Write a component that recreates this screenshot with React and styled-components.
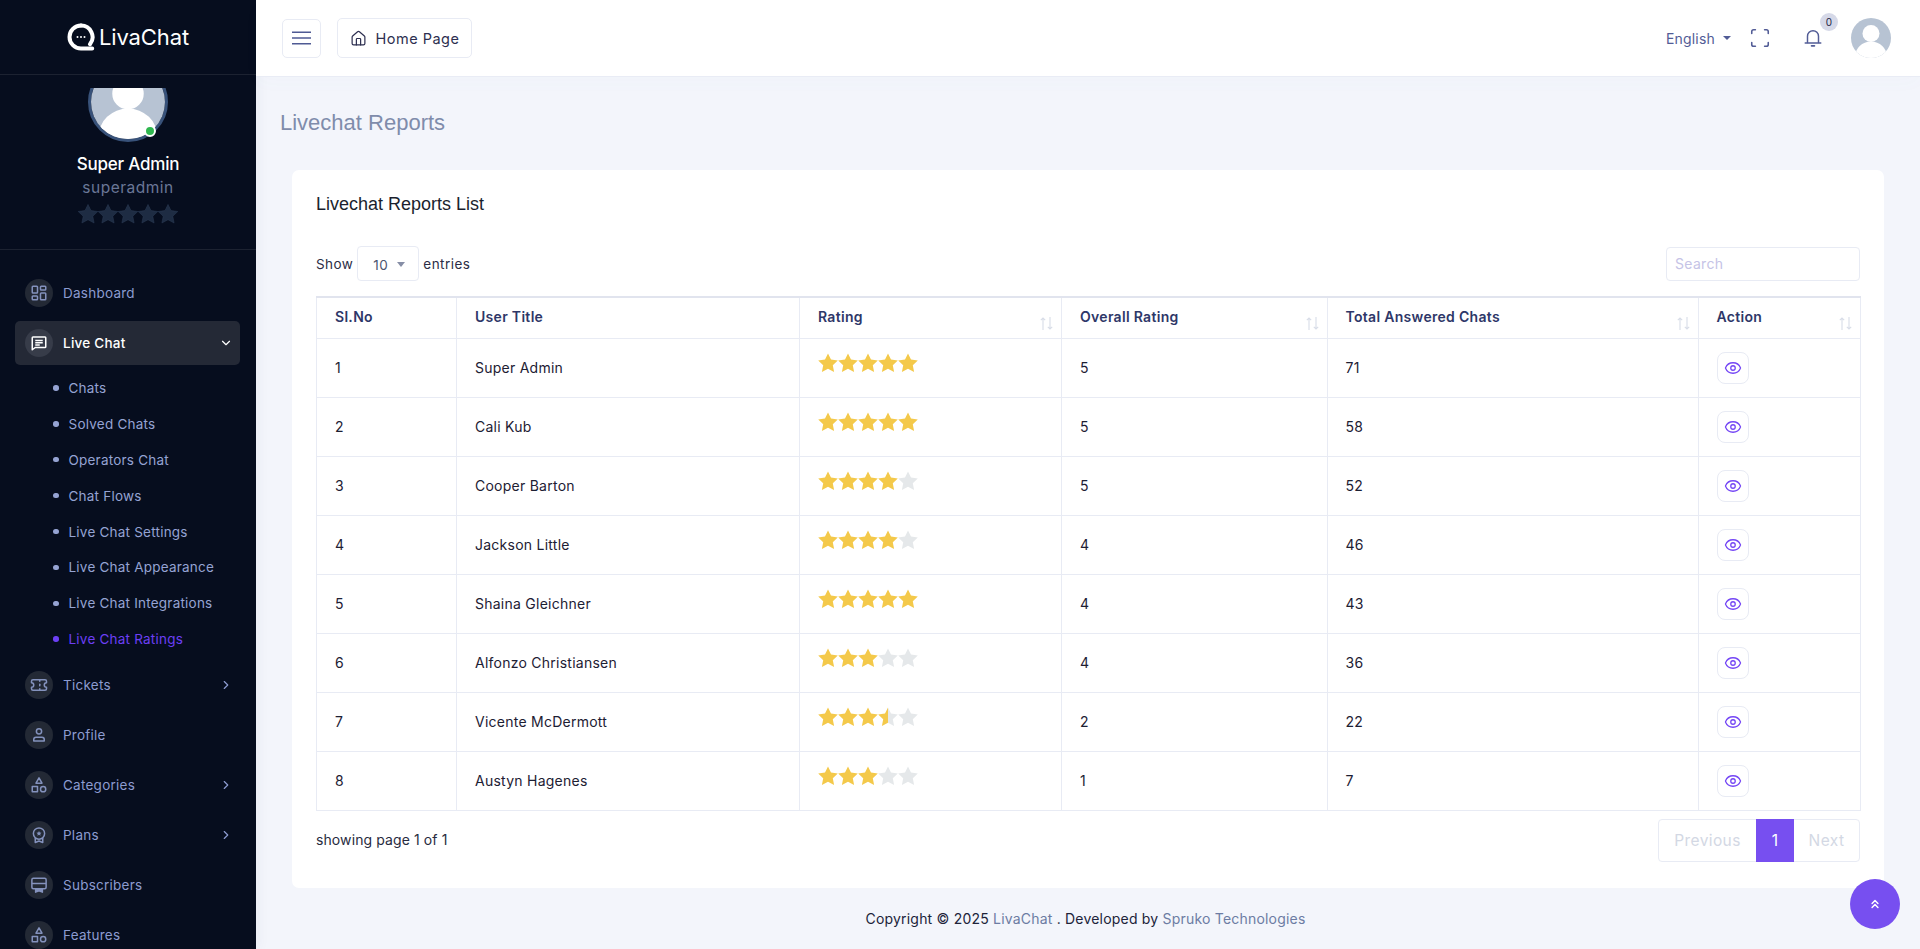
import React from 'react';
import styled, { createGlobalStyle } from 'styled-components';
import { LayoutDashboard, Ticket, ChevronDown, ChevronRight, House, Scan, Eye, ChevronsUp } from 'lucide-react';

const GlobalStyle = createGlobalStyle`
  html, body {
    margin: 0;
    padding: 0;
    height: 100%;
    overflow: hidden;
    background: #f3f5fb;
    font-family: Inter, "Noto Sans", sans-serif;
  }
  * { box-sizing: border-box; }
`;

const Page = styled.div`
  display: flex;
  height: 100vh;
  overflow: hidden;
`;

const Sidebar = styled.aside`
  width: 256px;
  flex-shrink: 0;
  height: 100vh;
  overflow: hidden;
  background: #060d1e;
  box-shadow: 2px 0 12px rgba(40, 50, 90, 0.05);
`;

const Brand = styled.div`
  height: 75px;
  border-bottom: 1px solid #1c2231;
  display: flex;
  align-items: center;
  justify-content: center;
  gap: 4px;
`;

const BrandName = styled.span`
  color: #fff;
  font-size: 22px;
  font-weight: 400;
  letter-spacing: -0.1px;
`;

const UserPanel = styled.div`
  height: 175px;
  border-bottom: 1px solid #1c2231;
  padding-top: 13px;
  display: flex;
  flex-direction: column;
  align-items: center;
`;

const AvatarClip = styled.div`
  height: 54px;
  width: 90px;
  overflow: hidden;
  display: flex;
  justify-content: center;
  align-items: flex-end;
  position: relative;
`;

const StatusDot = styled.span`
  position: absolute;
  right: 17px;
  bottom: 5px;
  width: 12px;
  height: 12px;
  border-radius: 50%;
  background: #2fb74f;
  border: 2px solid #fff;
`;

const AvatarImage = styled.svg`
  display: block;
  flex-shrink: 0;
  border-radius: 50%;
  ${(p) => p.$ring && 'border: 3px solid #38527a; box-sizing: border-box;'}
`;

const UserName = styled.div`
  margin-top: 10px;
  color: #fff;
  font-size: 17px;
  font-weight: 500;
  line-height: 24px;
  letter-spacing: -0.2px;
`;

const UserLogin = styled.div`
  margin-top: 2px;
  color: #6a7797;
  font-size: 15.5px;
  line-height: 20px;
  letter-spacing: 0.5px;
`;

const StarRow = styled.div`
  display: flex;
  margin-top: ${(p) => p.$top || 0}px;
`;

const Nav = styled.nav`
  padding: 21px 16px 0 15px;
`;

const NavItem = styled.div`
  height: 44px;
  margin-bottom: 6px;
  padding: 0 10px;
  border-radius: 5px;
  display: flex;
  align-items: center;
  background: ${(p) => (p.$open ? '#242936' : 'transparent')};
  color: ${(p) => (p.$open ? '#fff' : '#8c9bd0')};
`;

const NavBadge = styled.span`
  width: 28px;
  height: 28px;
  border-radius: 50%;
  display: flex;
  align-items: center;
  justify-content: center;
  background: ${(p) => (p.$open ? '#373c49' : '#232935')};
  color: ${(p) => (p.$open ? '#fff' : '#8492bd')};
  flex-shrink: 0;
`;

const NavLabel = styled.span`
  margin-left: 10px;
  flex: 1;
  font-size: 13.5px;
  font-weight: ${(p) => (p.$open ? 500 : 400)};
  letter-spacing: 0.25px;
`;

const NavArrow = styled.span`
  display: flex;
  margin-right: -3px;
  color: ${(p) => (p.$open ? '#fff' : '#8c9bd0')};
`;

const SubList = styled.ul`
  list-style: none;
  margin: -1px 0 6px;
  padding: 0 0 0 38px;
`;

const SubItem = styled.li`
  height: 35.9px;
  display: flex;
  align-items: center;
  gap: 10px;
  font-size: 13.5px;
  letter-spacing: 0.22px;
  color: ${(p) => (p.$active ? '#6c3ff5' : '#95a3d3')};

  &::before {
    content: '';
    width: 5.5px;
    height: 5.5px;
    border-radius: 50%;
    background: ${(p) => (p.$active ? '#6c3ff5' : '#95a3d3')};
  }
`;

const Main = styled.main`
  flex: 1;
  min-width: 0;
  height: 100vh;
  display: flex;
  flex-direction: column;
`;

const Topbar = styled.header`
  height: 77px;
  flex-shrink: 0;
  background: #fff;
  border-bottom: 1px solid #e9ecf5;
  box-shadow: 0 6px 18px rgba(120, 130, 180, 0.02);
  padding: 0 29px 0 26px;
  display: flex;
  align-items: center;
`;

const MenuButton = styled.button`
  width: 39px;
  height: 39px;
  padding: 0;
  background: #fff;
  border: 1px solid #e8ebf4;
  border-radius: 5px;
  display: flex;
  align-items: center;
  justify-content: center;
  color: #4f5a94;
`;

const HomeButton = styled.button`
  margin-left: 16px;
  width: 135px;
  height: 40px;
  background: #fff;
  border: 1px solid #e8ebf4;
  border-radius: 5px;
  display: flex;
  align-items: center;
  justify-content: center;
  gap: 9px;
  padding: 0;
  font: inherit;
  font-size: 14.5px;
  letter-spacing: 0.5px;
  color: #2d2f50;
`;

const TopRight = styled.div`
  margin-left: auto;
  display: flex;
  align-items: center;
  color: #525c96;
`;

const Language = styled.div`
  display: flex;
  align-items: center;
  gap: 8px;
  font-size: 14px;
  letter-spacing: 0.2px;

  &::after {
    content: '';
    border-left: 4px solid transparent;
    border-right: 4px solid transparent;
    border-top: 4px solid #525c96;
  }
`;

const BellWrap = styled.div`
  position: relative;
  display: flex;
  margin: 0 27px 0 31px;
`;

const BellCount = styled.span`
  position: absolute;
  top: -14px;
  right: -14px;
  width: 18px;
  height: 18px;
  border-radius: 50%;
  background: #d6d9e8;
  color: #232646;
  font-size: 10px;
  display: flex;
  align-items: center;
  justify-content: center;
`;

const FullscreenIcon = styled.span`
  display: flex;
  margin-left: 18px;
`;

const Content = styled.div`
  flex: 1;
  min-height: 0;
  display: flex;
  flex-direction: column;
`;

const PageTitle = styled.h1`
  margin: 33px 0 34px 24px;
  font-family: "Liberation Sans", Arial, sans-serif;
  font-size: 22px;
  font-weight: 400;
  line-height: 26px;
  color: #7f8cab;
`;

const Card = styled.section`
  margin: 0 36px;
  padding: 22px 24px 26px;
  background: #fff;
  border-radius: 7px;
`;

const CardTitle = styled.h2`
  margin: 0;
  font-family: "Liberation Sans", Arial, sans-serif;
  font-size: 18px;
  font-weight: 400;
  line-height: 24px;
  color: #1b1f2e;
`;

const Controls = styled.div`
  margin: 31px 0 15px;
  height: 34px;
  display: flex;
  align-items: center;
  justify-content: space-between;
`;

const LengthControl = styled.div`
  display: flex;
  align-items: center;
  gap: 4px;
  margin-top: -1px;
  font-size: 13.5px;
  letter-spacing: 0.45px;
  color: #2b2d45;
`;

const LengthSelect = styled.div`
  width: 62px;
  height: 35px;
  padding: 2px 13px 0 15px;
  border: 1px solid #e8ebf4;
  border-radius: 4px;
  display: flex;
  align-items: center;
  justify-content: space-between;
  color: #4c5470;

  &::after {
    content: '';
    border-left: 4px solid transparent;
    border-right: 4px solid transparent;
    border-top: 5px solid #868ea6;
  }
`;

const SearchInput = styled.input`
  width: 194px;
  height: 34px;
  padding: 0 8px 1px;
  border: 1px solid #e8ebf4;
  border-radius: 4px;
  outline: none;
  font: inherit;
  font-size: 14px;
  letter-spacing: 0.3px;

  &::placeholder {
    color: #c5c3e6;
  }
`;

const Table = styled.table`
  width: 100%;
  table-layout: fixed;
  border-collapse: collapse;
  border-top: 2px solid #e1e4ee;
`;

const HeadCell = styled.th`
  position: relative;
  height: 41px;
  padding: 0 18px 2px;
  text-align: left;
  font-size: 14px;
  font-weight: 600;
  letter-spacing: 0.3px;
  color: #2e3768;
  border: 1px solid #e8ebf4;
  border-top: 0;
`;

const SortMark = styled.svg`
  position: absolute;
  right: 8px;
  top: 19px;
`;

const BodyCell = styled.td`
  height: 59px;
  padding: 0 18px;
  font-size: 14px;
  letter-spacing: 0.25px;
  color: #1d2033;
  border: 1px solid #e8ebf4;
`;

const RatingStars = styled.div`
  display: flex;
  margin-top: -10px;
`;

const ViewButton = styled.button`
  width: 32px;
  height: 32px;
  padding: 0;
  background: #fff;
  border: 1px solid #e8ebf4;
  border-radius: 8px;
  display: flex;
  align-items: center;
  justify-content: center;
  color: #7446f5;
`;

const TableFooter = styled.div`
  margin-top: 8px;
  display: flex;
  align-items: flex-start;
  justify-content: space-between;
`;

const PageInfo = styled.div`
  margin-top: 12px;
  font-size: 14px;
  letter-spacing: 0.1px;
  color: #282b40;
`;

const Pagination = styled.div`
  display: flex;
  height: 43px;
  border: 1px solid #e8ebf4;
  border-radius: 4px;
  font-size: 15.5px;
  color: #d3d8e4;
`;

const PageLink = styled.span`
  width: ${(p) => p.$width}px;
  margin: ${(p) => (p.$current ? '-1px 0' : '0')};
  display: flex;
  align-items: center;
  justify-content: center;
  background: ${(p) => (p.$current ? '#774ff0' : 'transparent')};
  color: ${(p) => (p.$current ? '#fff' : 'inherit')};
  letter-spacing: 0.4px;
`;

const Footer = styled.footer`
  flex: 1;
  padding-right: 5px;
  display: flex;
  align-items: center;
  justify-content: center;
  font-size: 14px;
  letter-spacing: 0.2px;
  color: #20233a;
  white-space: pre;
`;

const FooterLink = styled.span`
  color: #6c7ca3;
`;

const ScrollTop = styled.button`
  position: fixed;
  right: 20px;
  bottom: 20px;
  width: 50px;
  height: 50px;
  padding: 0;
  border: 0;
  border-radius: 50%;
  background: #774ff0;
  color: #fff;
  display: flex;
  align-items: center;
  justify-content: center;
`;

const STAR_PATH = 'M10 .4l3 6.2 6.8.9-5 4.7 1.3 6.8L10 15.7 3.9 19l1.3-6.8-5-4.7 6.8-.9z';

const Star = ({ fill, empty, fraction = 0, size = 20, id, outline }) => (
  <svg width={size} height={size} viewBox="0 0 20 20">
    {fraction > 0 && (
      <defs>
        <linearGradient id={id}>
          <stop offset={fraction} stopColor={fill} />
          <stop offset={fraction} stopColor={empty} />
        </linearGradient>
      </defs>
    )}
    <path d={STAR_PATH} fill={fraction > 0 ? `url(#${id})` : fill} stroke={outline} strokeWidth={outline ? 0.5 : 0} />
  </svg>
);

const Stars = ({ value, rowId }) => (
  <>
    {[0, 1, 2, 3, 4].map((i) => {
      const part = value - i;
      return (
        <Star
          key={i}
          id={`${rowId}-${i}`}
          fill={part > 0 ? '#f4c94a' : '#e5e8ea'}
          empty="#e5e8ea"
          fraction={part > 0 && part < 1 ? part : 0}
        />
      );
    })}
  </>
);

const Avatar = ({ size, ring }) => (
  <AvatarImage width={size} height={size} viewBox="0 0 80 80" $ring={ring}>
    <rect width="80" height="80" fill="#b7c3d3" />
    <circle cx="40" cy="31" r="17" fill="#fff" />
    <ellipse cx="40" cy="78" rx="32" ry="31" fill="#fff" />
  </AvatarImage>
);

const LogoMark = () => (
  <svg width="28" height="28" viewBox="0 0 28 28">
    <path
      d="M14 2.5a11.5 11.5 0 1 0 0 23h11.2"
      fill="none"
      stroke="#fff"
      strokeWidth="4"
      strokeLinecap="round"
    />
    <path d="M14 2.5a11.5 11.5 0 0 1 9 18.7" fill="none" stroke="#fff" strokeWidth="4" strokeLinecap="round" />
    <circle cx="10.5" cy="14" r="1" fill="#fff" />
    <circle cx="14" cy="14" r="1" fill="#fff" />
    <circle cx="17.5" cy="14" r="1" fill="#fff" />
  </svg>
);

const ChatIcon = () => (
  <svg width="18" height="18" viewBox="0 0 24 24" fill="none" stroke="currentColor" strokeWidth="2" strokeLinejoin="round">
    <path d="M4 4h16a1 1 0 0 1 1 1v12a1 1 0 0 1-1 1H7l-4 3V5a1 1 0 0 1 1-1z" />
    <path d="M7 8.5h10M7 11.5h10M7 14.5h6" />
  </svg>
);

const ProfileIcon = () => (
  <svg width="18" height="18" viewBox="0 0 24 24" fill="none" stroke="currentColor" strokeWidth="2" strokeLinejoin="round">
    <circle cx="12" cy="7" r="3.5" />
    <path d="M5 20v-2a3 3 0 0 1 3-3h8a3 3 0 0 1 3 3v2z" />
  </svg>
);

const ShapesIcon = () => (
  <svg width="18" height="18" viewBox="0 0 24 24" fill="none" stroke="currentColor" strokeWidth="2" strokeLinejoin="round">
    <path d="M12 2.5l4 7H8z" />
    <rect x="3" y="14" width="7" height="7" />
    <circle cx="17.5" cy="17.5" r="3.5" />
  </svg>
);

const AwardIcon = () => (
  <svg width="18" height="18" viewBox="0 0 24 24" fill="none" stroke="currentColor" strokeWidth="2" strokeLinejoin="round">
    <circle cx="12" cy="10" r="7.5" />
    <path d="M7 16v6l5-2 5 2v-6" />
    <path d="M12 6.5l1 2.3 2.4.2-1.8 1.6.6 2.4-2.2-1.3-2.2 1.3.6-2.4L8.6 9l2.4-.2z" fill="currentColor" stroke="none" />
  </svg>
);

const SubscribersIcon = () => (
  <svg width="18" height="18" viewBox="0 0 24 24" fill="none" stroke="currentColor" strokeWidth="2" strokeLinejoin="round">
    <rect x="2.5" y="3" width="19" height="14" rx="2" />
    <path d="M2.5 10h19" />
    <path d="M7.5 17v4.5l4.5-1.8 4.5 1.8V17z" fill="currentColor" />
  </svg>
);

const BellIcon = () => (
  <svg width="22" height="22" viewBox="0 0 24 24" fill="none" stroke="currentColor" strokeWidth="1.6" strokeLinecap="round">
    <path d="M6 17v-7a6 6 0 0 1 12 0v7" />
    <path d="M3.5 17.5h17" />
    <path d="M10.5 20.5h3" strokeWidth="2" />
  </svg>
);

const HamburgerIcon = () => (
  <svg width="19" height="14" viewBox="0 0 19 14" fill="none" stroke="currentColor" strokeWidth="1.4">
    <path d="M0 1.2h19M0 7h19M0 12.8h19" />
  </svg>
);

const SortIcon = () => (
  <SortMark width="13" height="13" viewBox="0 0 13 13" fill="none" stroke="#d8dde8" strokeWidth="1.1">
    <path d="M3 13V1M.8 3.2L3 1l2.2 2.2" />
    <path d="M10 0v12M7.8 9.8L10 12l2.2-2.2" />
  </SortMark>
);

const MENU_TOP = [{ label: 'Dashboard', Icon: () => <LayoutDashboard size={18} /> }];
const MENU_BOTTOM = [
  { label: 'Tickets', Icon: () => <Ticket size={18} />, more: true },
  { label: 'Profile', Icon: ProfileIcon },
  { label: 'Categories', Icon: ShapesIcon, more: true },
  { label: 'Plans', Icon: AwardIcon, more: true },
  { label: 'Subscribers', Icon: SubscribersIcon },
  { label: 'Features', Icon: ShapesIcon },
];
const CHAT_LINKS = [
  'Chats',
  'Solved Chats',
  'Operators Chat',
  'Chat Flows',
  'Live Chat Settings',
  'Live Chat Appearance',
  'Live Chat Integrations',
  'Live Chat Ratings',
];
const COLUMNS = [
  { title: 'Sl.No', width: 140 },
  { title: 'User Title', width: 343 },
  { title: 'Rating', width: 262, sortable: true },
  { title: 'Overall Rating', width: 265.5, sortable: true },
  { title: 'Total Answered Chats', width: 371, sortable: true },
  { title: 'Action', width: 162.5, sortable: true },
];
const ROWS = [
  ['Super Admin', 5, 5, 71],
  ['Cali Kub', 5, 5, 58],
  ['Cooper Barton', 4, 5, 52],
  ['Jackson Little', 4, 4, 46],
  ['Shaina Gleichner', 5, 4, 43],
  ['Alfonzo Christiansen', 3, 4, 36],
  ['Vicente McDermott', 3.5, 2, 22],
  ['Austyn Hagenes', 3, 1, 7],
];

const MenuRow = ({ label, Icon, more, open }) => (
  <NavItem $open={open}>
    <NavBadge $open={open}>
      <Icon />
    </NavBadge>
    <NavLabel $open={open}>{label}</NavLabel>
    {more && (
      <NavArrow $open={open}>
        {open ? <ChevronDown size={14} /> : <ChevronRight size={14} />}
      </NavArrow>
    )}
  </NavItem>
);

const App = () => (
  <Page>
    <GlobalStyle />
    <Sidebar>
      <Brand>
        <LogoMark />
        <BrandName>LivaChat</BrandName>
      </Brand>
      <UserPanel>
        <AvatarClip>
          <Avatar size={80} ring />
          <StatusDot />
        </AvatarClip>
        <UserName>Super Admin</UserName>
        <UserLogin>superadmin</UserLogin>
        <StarRow $top={6}>
          {[0, 1, 2, 3, 4].map((i) => (
            <Star key={i} fill="#1e2c43" empty="#1e2c43" outline="#2d3c57" />
          ))}
        </StarRow>
      </UserPanel>
      <Nav>
        {MENU_TOP.map((item) => (
          <MenuRow key={item.label} {...item} />
        ))}
        <MenuRow label="Live Chat" Icon={ChatIcon} more open />
        <SubList>
          {CHAT_LINKS.map((link) => (
            <SubItem key={link} $active={link === 'Live Chat Ratings'}>
              {link}
            </SubItem>
          ))}
        </SubList>
        {MENU_BOTTOM.map((item) => (
          <MenuRow key={item.label} {...item} />
        ))}
      </Nav>
    </Sidebar>
    <Main>
      <Topbar>
        <MenuButton>
          <HamburgerIcon />
        </MenuButton>
        <HomeButton>
          <House size={17} strokeWidth={1.7} />
          Home Page
        </HomeButton>
        <TopRight>
          <Language>English</Language>
          <FullscreenIcon>
            <Scan size={22} strokeWidth={1.7} />
          </FullscreenIcon>
          <BellWrap>
            <BellIcon />
            <BellCount>0</BellCount>
          </BellWrap>
          <Avatar size={40} />
        </TopRight>
      </Topbar>
      <Content>
        <PageTitle>Livechat Reports</PageTitle>
        <Card>
          <CardTitle>Livechat Reports List</CardTitle>
          <Controls>
            <LengthControl>
              Show
              <LengthSelect>10</LengthSelect>
              entries
            </LengthControl>
            <SearchInput placeholder="Search" />
          </Controls>
          <Table>
            <colgroup>
              {COLUMNS.map((col) => (
                <col key={col.title} width={col.width} />
              ))}
            </colgroup>
            <thead>
              <tr>
                {COLUMNS.map((col) => (
                  <HeadCell key={col.title}>
                    {col.title}
                    {col.sortable && <SortIcon />}
                  </HeadCell>
                ))}
              </tr>
            </thead>
            <tbody>
              {ROWS.map(([name, rating, overall, answered], index) => (
                <tr key={name}>
                  <BodyCell>{index + 1}</BodyCell>
                  <BodyCell>{name}</BodyCell>
                  <BodyCell>
                    <RatingStars>
                      <Stars value={rating} rowId={`row-${index}`} />
                    </RatingStars>
                  </BodyCell>
                  <BodyCell>{overall}</BodyCell>
                  <BodyCell>{answered}</BodyCell>
                  <BodyCell>
                    <ViewButton>
                      <Eye size={18} strokeWidth={1.7} />
                    </ViewButton>
                  </BodyCell>
                </tr>
              ))}
            </tbody>
          </Table>
          <TableFooter>
            <PageInfo>showing page 1 of 1</PageInfo>
            <Pagination>
              <PageLink $width={97}>Previous</PageLink>
              <PageLink $width={38} $current>1</PageLink>
              <PageLink $width={65}>Next</PageLink>
            </Pagination>
          </TableFooter>
        </Card>
        <Footer>
          Copyright © 2025 <FooterLink>LivaChat</FooterLink> . Developed by <FooterLink>Spruko Technologies</FooterLink>
        </Footer>
      </Content>
    </Main>
    <ScrollTop>
      <ChevronsUp size={14} strokeWidth={2.5} />
    </ScrollTop>
  </Page>
);

export default App;
